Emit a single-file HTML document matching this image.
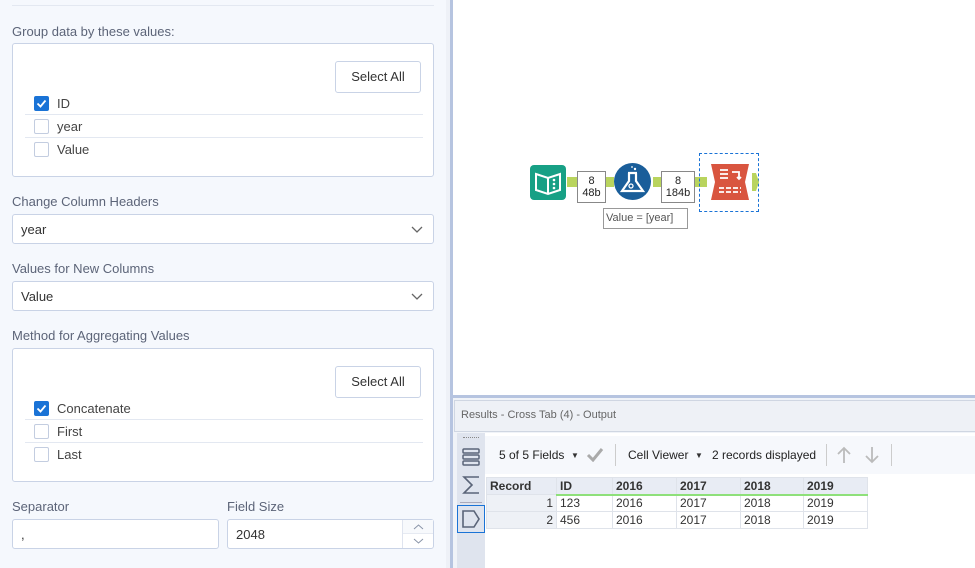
<!DOCTYPE html>
<html><head><style>
*{box-sizing:border-box;margin:0;padding:0}
body{width:975px;height:568px;overflow:hidden;position:relative;background:#fff;font-family:"Liberation Sans",sans-serif;font-size:13px;color:#333}
.a{position:absolute}
.lbl{position:absolute;left:12px;color:#5c6478;font-size:13px}
.box{position:absolute;left:12px;width:422px;background:#fff;border:1px solid #c9d3e6;border-radius:3px}
.btn{position:absolute;right:12px;width:86px;height:32px;border:1px solid #c9d3e6;border-radius:3px;background:#fff;text-align:center;line-height:30px;font-size:13px;color:#333}
.row{position:absolute;left:12px;width:398px;height:23px;font-size:13px;color:#444}
.row span{position:absolute;left:32px;top:4px}
.cb{position:absolute;left:9px;top:4px;width:15px;height:15px;border:1px solid #c3cde0;border-radius:2px;background:#fff}
.cb.on{background:#1a73d6;border-color:#1a73d6}
.sep{border-bottom:1px solid #e3e8f1}
.sel{position:absolute;left:12px;width:422px;height:30px;background:#fff;border:1px solid #c9d3e6;border-radius:3px;padding:7px 8px;font-size:13px}
.chev{position:absolute;right:10px;top:8px}
table{border-collapse:collapse;font-size:12px}
td{border:1px solid #dfe3ea;height:17px;padding:0 3px;}
</style></head><body>
<div class="a" style="left:0;top:0;width:446px;height:568px;background:#f5f8fd"></div>
<div class="a" style="left:12px;top:5px;width:422px;height:1px;background:#e3e8f1"></div>
<div class="a" style="left:446px;top:0;width:4px;height:568px;background:#eef1f7"></div>
<div class="a" style="left:450px;top:0;width:3px;height:568px;background:#b6c4e0"></div>

<div class="lbl" style="top:24px">Group data by these values:</div>
<div class="box" style="top:43px;height:134px">
 <div class="btn" style="top:17px">Select All</div>
 <div class="row sep" style="top:48px"><div class="cb on"><svg width="13" height="13" viewBox="0 0 13 13"><path d="M2.5 6.5l3 3 5-6" stroke="#fff" stroke-width="1.8" fill="none"/></svg></div><span>ID</span></div>
 <div class="row sep" style="top:71px"><div class="cb"></div><span>year</span></div>
 <div class="row" style="top:94px"><div class="cb"></div><span>Value</span></div>
</div>

<div class="lbl" style="top:194px">Change Column Headers</div>
<div class="sel" style="top:214px">year<svg class="chev" width="12" height="12" viewBox="0 0 12 12"><path d="M1 4l5 5 5-5" stroke="#666" stroke-width="1.3" fill="none"/></svg></div>
<div class="lbl" style="top:261px">Values for New Columns</div>
<div class="sel" style="top:281px">Value<svg class="chev" width="12" height="12" viewBox="0 0 12 12"><path d="M1 4l5 5 5-5" stroke="#666" stroke-width="1.3" fill="none"/></svg></div>

<div class="lbl" style="top:328px">Method for Aggregating Values</div>
<div class="box" style="top:348px;height:134px">
 <div class="btn" style="top:17px">Select All</div>
 <div class="row sep" style="top:48px"><div class="cb on"><svg width="13" height="13" viewBox="0 0 13 13"><path d="M2.5 6.5l3 3 5-6" stroke="#fff" stroke-width="1.8" fill="none"/></svg></div><span>Concatenate</span></div>
 <div class="row sep" style="top:71px"><div class="cb"></div><span>First</span></div>
 <div class="row" style="top:94px"><div class="cb"></div><span>Last</span></div>
</div>

<div class="lbl" style="top:499px">Separator</div>
<div class="lbl" style="top:499px;left:227px">Field Size</div>
<div class="sel" style="top:519px;width:207px">,</div>
<div class="sel" style="top:519px;left:227px;width:207px">2048</div>
<div class="a" style="left:402px;top:520px;width:31px;height:28px;border-left:1px solid #dfe4ef">
 <div style="height:14px;border-bottom:1px solid #e6eaf2;background:#f7f9fc"></div>
 <svg class="a" style="left:10px;top:3px" width="11" height="8" viewBox="0 0 11 8"><path d="M1 6l4.5-4 4.5 4" stroke="#8994a8" fill="none"/></svg>
 <svg class="a" style="left:10px;top:17px" width="11" height="8" viewBox="0 0 11 8"><path d="M1 2l4.5 4 4.5-4" stroke="#8994a8" fill="none"/></svg>
</div>

<div class="a" style="left:453px;top:395px;width:522px;height:3px;background:#b6c4e0"></div>
<div class="a" style="left:530px;top:165px;width:36px;height:35px;background:#17a085;border-radius:4px"></div>
<svg class="a" style="left:533px;top:170px" width="30" height="26" viewBox="0 0 30 26"><path d="M3 4l12 4 12-4v16l-12 4-12-4z" fill="none" stroke="#fff" stroke-width="2"/><path d="M15 8v16" stroke="#fff" stroke-width="2"/><circle cx="21" cy="10" r="1.3" fill="#fff"/><circle cx="21" cy="14" r="1.3" fill="#fff"/><circle cx="21" cy="18" r="1.3" fill="#fff"/></svg>
<div class="a" style="left:567px;top:177px;width:10px;height:10px;background:#b9d45e"></div>
<div class="a" style="left:577px;top:171px;width:29px;height:32px;border:1px solid #888;background:#fff;font-size:11px;text-align:center;line-height:12px;padding-top:3px;color:#222">8<br>48b</div>
<div class="a" style="left:606px;top:177px;width:8px;height:10px;background:#b9d45e"></div>
<div class="a" style="left:614px;top:163px;width:37px;height:37px;border-radius:50%;background:#1a5e9a"></div>
<svg class="a" style="left:617px;top:164px" width="31" height="33" viewBox="0 0 31 33"><path d="M11 9h9M12 9v8l-7 10h21l-7-10V9" fill="none" stroke="#fff" stroke-width="2.2"/><circle cx="14" cy="22" r="2" fill="none" stroke="#fff" stroke-width="1.3"/><circle cx="18" cy="5" r="1.2" fill="#fff"/><circle cx="15" cy="3" r="0.9" fill="#fff"/></svg>
<div class="a" style="left:653px;top:177px;width:8px;height:10px;background:#b9d45e"></div>
<div class="a" style="left:661px;top:171px;width:34px;height:32px;border:1px solid #888;background:#fff;font-size:11px;text-align:center;line-height:12px;padding-top:3px;color:#222">8<br>184b</div>
<div class="a" style="left:695px;top:177px;width:12px;height:10px;background:#b9d45e"></div>
<div class="a" style="left:699px;top:153px;width:60px;height:59px;border:1px dashed #1a73d6"></div>
<svg class="a" style="left:708px;top:162px" width="58" height="40" viewBox="0 0 58 40"><path d="M3 2h38l-4 18 4 18H3l4-18z" fill="#d9553f"/><path d="M44 11h4l3 9-3 9h-4z" fill="#b9d45e"/><path d="M12 8h8M12 12h8M12 16h8M24 10h7v7m-2-2l2 2 2-2" stroke="#fff" stroke-width="1.8" fill="none"/><path d="M11 26h22M11 30h22" stroke="#fff" stroke-width="1.8" stroke-dasharray="5 2"/></svg>
<div class="a" style="left:603px;top:208px;width:85px;height:21px;border:1px solid #999;background:#fff;font-size:11px;color:#555;padding:3px 2px">Value = [year]</div>

<div class="a" style="left:453px;top:398px;width:522px;height:170px;background:#f0f3f8"></div>
<div class="a" style="left:454px;top:400px;width:521px;height:32px;background:#eef1f6;border:1px solid #cfd6e2;border-right:none;padding:8px 6px;font-size:11px;color:#666">Results - Cross Tab (4) - Output</div>
<div class="a" style="left:457px;top:433px;width:28px;height:135px;background:#dfe4ee"></div>
<div class="a" style="left:463px;top:437px;width:16px;height:1px;border-top:1px dotted #888"></div>
<svg class="a" style="left:462px;top:448px" width="18" height="18" viewBox="0 0 18 18"><rect x="1" y="1" width="16" height="4" rx="1" fill="none" stroke="#5a6478" stroke-width="1.5"/><rect x="1" y="7" width="16" height="4" rx="1" fill="none" stroke="#5a6478" stroke-width="1.5"/><rect x="1" y="13" width="16" height="4" rx="1" fill="none" stroke="#5a6478" stroke-width="1.5"/></svg>
<svg class="a" style="left:462px;top:476px" width="18" height="18" viewBox="0 0 18 18"><path d="M17 1H2l8 8-8 8h15" fill="none" stroke="#5a6478" stroke-width="1.6"/></svg>
<div class="a" style="left:460px;top:502px;width:22px;height:1px;background:#aab"></div>
<div class="a" style="left:457px;top:505px;width:28px;height:28px;border:1px solid #1a73d6"></div>
<svg class="a" style="left:461px;top:509px" width="20" height="20" viewBox="0 0 20 20"><path d="M2 2h11l5 8-5 8H2z" fill="none" stroke="#5a6478" stroke-width="1.6"/></svg>
<div class="a" style="left:485px;top:433px;width:490px;height:135px;background:#fff"></div>
<div class="a" style="left:485px;top:436px;width:490px;height:38px;background:#f6f8fc"></div>
<div class="a" style="left:499px;top:448px;font-size:12px;color:#222">5 of 5 Fields</div>
<div class="a" style="left:571px;top:451px;font-size:8px;color:#333">▼</div>
<svg class="a" style="left:586px;top:447px" width="18" height="15" viewBox="0 0 18 15"><path d="M2 8l5 5L16 2" stroke="#aaa" stroke-width="3" fill="none"/></svg>
<div class="a" style="left:615px;top:444px;width:1px;height:22px;background:#ccc"></div>
<div class="a" style="left:628px;top:448px;font-size:12px;color:#222">Cell Viewer</div>
<div class="a" style="left:695px;top:451px;font-size:8px;color:#333">▼</div>
<div class="a" style="left:712px;top:448px;font-size:12px;color:#222">2 records displayed</div>
<div class="a" style="left:826px;top:444px;width:1px;height:22px;background:#ccc"></div>
<svg class="a" style="left:836px;top:446px" width="16" height="18" viewBox="0 0 16 18"><path d="M8 17V2M2 8l6-6 6 6" stroke="#bbb" stroke-width="1.8" fill="none"/></svg>
<svg class="a" style="left:864px;top:446px" width="16" height="18" viewBox="0 0 16 18"><path d="M8 1v15M2 10l6 6 6-6" stroke="#bbb" stroke-width="1.8" fill="none"/></svg>
<div class="a" style="left:891px;top:444px;width:1px;height:22px;background:#ccc"></div>
<table class="a" style="left:486px;top:477px">
<tr style="background:#e8ecf4;font-weight:bold"><td style="width:70px">Record</td><td style="width:56px;border-bottom:2px solid #8ee07a">ID</td><td style="width:64px;border-bottom:2px solid #8ee07a">2016</td><td style="width:64px;border-bottom:2px solid #8ee07a">2017</td><td style="width:63px;border-bottom:2px solid #8ee07a">2018</td><td style="width:64px;border-bottom:2px solid #8ee07a">2019</td></tr>
<tr><td style="text-align:right;background:#eef1f6">1</td><td>123</td><td>2016</td><td>2017</td><td>2018</td><td>2019</td></tr>
<tr><td style="text-align:right;background:#eef1f6">2</td><td>456</td><td>2016</td><td>2017</td><td>2018</td><td>2019</td></tr>
</table>
</body></html>
